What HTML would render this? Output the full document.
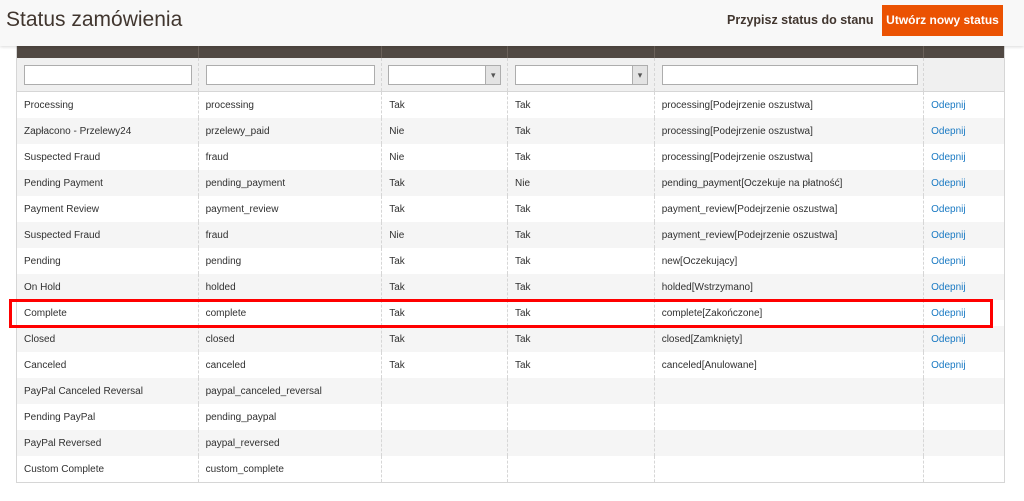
<!DOCTYPE html>
<html><head><meta charset="utf-8"><style>
*{margin:0;padding:0;box-sizing:border-box}
body{width:1024px;height:501px;background:#fff;font-family:"Liberation Sans",sans-serif;position:relative;overflow:hidden;color:#303030}
.top{position:absolute;left:0;top:0;width:1024px;height:46px;background:#f8f8f8;box-shadow:0 1px 3px rgba(0,0,0,.15);z-index:2}
.title{position:absolute;left:6px;top:8px;font-size:21px;color:#41362f}
.link{position:absolute;left:727px;top:13px;font-size:12.5px;font-weight:bold;color:#41362f;white-space:nowrap}
.btn{position:absolute;left:882px;top:5px;width:121px;height:31px;background:#eb5202;color:#fff;font-size:12px;font-weight:bold;text-align:center;line-height:31px;white-space:nowrap}
.grid{position:absolute;left:16px;top:40px;width:989px;border:1px solid #d6d6d6;border-top:none}
.hd{height:18px;background:#514943;display:flex}
.hd div{border-right:1px solid #6b615a}
.row{display:flex;height:26px;font-size:10px;line-height:28px}
.row div{border-right:1px dashed #d6d6d6;padding-left:7px;white-space:nowrap;overflow:hidden}
.row div:last-child{border-right:none}
.row:nth-child(even){background:#f5f5f5}
.flt{display:flex;height:34px;background:#f0f0f0;border-bottom:1px solid #d6d6d6}
.flt div{border-right:1px dashed #d6d6d6;position:relative}
.inp{position:absolute;top:7px;height:20px;background:#fff;border:1px solid #adadad}
.sel:after{content:"▾";position:absolute;right:0;top:0;width:14px;height:18px;background:#e3e3e3;border-left:1px solid #adadad;font-size:9px;text-align:center;line-height:18px;color:#555}
a{color:#1979c3;text-decoration:none}
.c1{width:182px}.c2{width:184px}.c3{width:126px}.c4{width:147px}.c5{width:270px}.c6{width:80px}
.red{position:absolute;left:9px;top:299px;width:984px;height:29px;border:3px solid #f00;z-index:3}
</style></head><body>
<div class="top"><div class="title">Status zamówienia</div><div class="link">Przypisz status do stanu</div><div class="btn">Utwórz nowy status</div></div>
<div class="grid">
<div class="hd"><div class="c1"></div><div class="c2"></div><div class="c3"></div><div class="c4"></div><div class="c5"></div><div class="c6" style="border:none"></div></div>
<div class="flt"><div class="c1"><span class="inp" style="left:7px;width:168px"></span></div><div class="c2"><span class="inp" style="left:7px;width:169px"></span></div><div class="c3"><span class="inp sel" style="left:6px;width:113px"></span></div><div class="c4"><span class="inp sel" style="left:7px;width:133px"></span></div><div class="c5"><span class="inp" style="left:7px;width:256px"></span></div><div class="c6" style="border:none"></div></div>
<div>
<div class="row"><div class="c1">Processing</div><div class="c2">processing</div><div class="c3">Tak</div><div class="c4">Tak</div><div class="c5">processing[Podejrzenie oszustwa]</div><div class="c6"><a>Odepnij</a></div></div>
<div class="row"><div class="c1">Zapłacono - Przelewy24</div><div class="c2">przelewy_paid</div><div class="c3">Nie</div><div class="c4">Tak</div><div class="c5">processing[Podejrzenie oszustwa]</div><div class="c6"><a>Odepnij</a></div></div>
<div class="row"><div class="c1">Suspected Fraud</div><div class="c2">fraud</div><div class="c3">Nie</div><div class="c4">Tak</div><div class="c5">processing[Podejrzenie oszustwa]</div><div class="c6"><a>Odepnij</a></div></div>
<div class="row"><div class="c1">Pending Payment</div><div class="c2">pending_payment</div><div class="c3">Tak</div><div class="c4">Nie</div><div class="c5">pending_payment[Oczekuje na płatność]</div><div class="c6"><a>Odepnij</a></div></div>
<div class="row"><div class="c1">Payment Review</div><div class="c2">payment_review</div><div class="c3">Tak</div><div class="c4">Tak</div><div class="c5">payment_review[Podejrzenie oszustwa]</div><div class="c6"><a>Odepnij</a></div></div>
<div class="row"><div class="c1">Suspected Fraud</div><div class="c2">fraud</div><div class="c3">Nie</div><div class="c4">Tak</div><div class="c5">payment_review[Podejrzenie oszustwa]</div><div class="c6"><a>Odepnij</a></div></div>
<div class="row"><div class="c1">Pending</div><div class="c2">pending</div><div class="c3">Tak</div><div class="c4">Tak</div><div class="c5">new[Oczekujący]</div><div class="c6"><a>Odepnij</a></div></div>
<div class="row"><div class="c1">On Hold</div><div class="c2">holded</div><div class="c3">Tak</div><div class="c4">Tak</div><div class="c5">holded[Wstrzymano]</div><div class="c6"><a>Odepnij</a></div></div>
<div class="row"><div class="c1">Complete</div><div class="c2">complete</div><div class="c3">Tak</div><div class="c4">Tak</div><div class="c5">complete[Zakończone]</div><div class="c6"><a>Odepnij</a></div></div>
<div class="row"><div class="c1">Closed</div><div class="c2">closed</div><div class="c3">Tak</div><div class="c4">Tak</div><div class="c5">closed[Zamknięty]</div><div class="c6"><a>Odepnij</a></div></div>
<div class="row"><div class="c1">Canceled</div><div class="c2">canceled</div><div class="c3">Tak</div><div class="c4">Tak</div><div class="c5">canceled[Anulowane]</div><div class="c6"><a>Odepnij</a></div></div>
<div class="row"><div class="c1">PayPal Canceled Reversal</div><div class="c2">paypal_canceled_reversal</div><div class="c3"></div><div class="c4"></div><div class="c5"></div><div class="c6"></div></div>
<div class="row"><div class="c1">Pending PayPal</div><div class="c2">pending_paypal</div><div class="c3"></div><div class="c4"></div><div class="c5"></div><div class="c6"></div></div>
<div class="row"><div class="c1">PayPal Reversed</div><div class="c2">paypal_reversed</div><div class="c3"></div><div class="c4"></div><div class="c5"></div><div class="c6"></div></div>
<div class="row"><div class="c1">Custom Complete</div><div class="c2">custom_complete</div><div class="c3"></div><div class="c4"></div><div class="c5"></div><div class="c6"></div></div>
</div></div>
<div class="red"></div>
</body></html>
